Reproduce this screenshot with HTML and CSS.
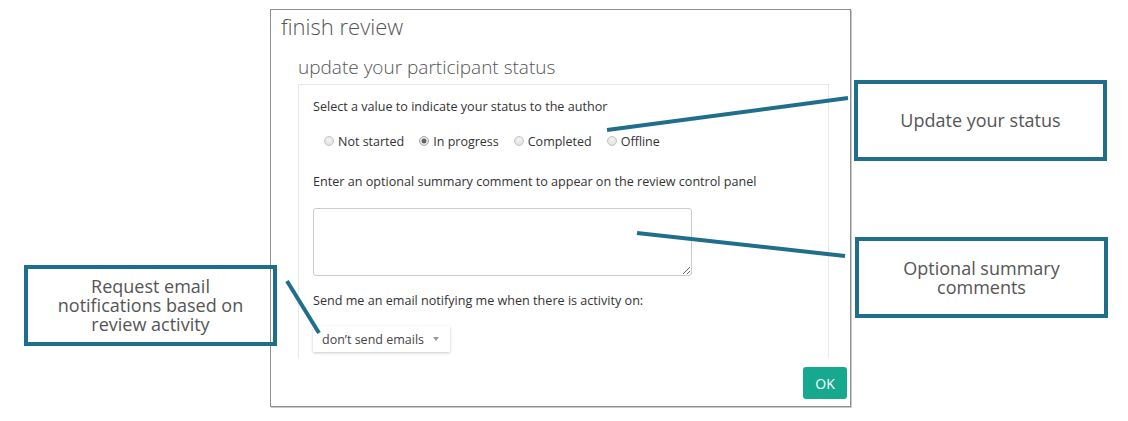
FILE: index.html
```html
<!DOCTYPE html>
<html>
<head>
<meta charset="utf-8">
<link rel="stylesheet" href="styles.css">
</head>
<body>
<div class="page">
  <div class="dialog">
    <div class="title">finish review</div>
    <div class="subtitle">update your participant status</div>
    <div class="panel">
      <div class="text">Select a value to indicate your status to the author</div>
      <div class="radios">
        <label class="radio"><span class="dot"></span>Not started</label>
        <label class="radio"><span class="dot checked"></span>In progress</label>
        <label class="radio"><span class="dot"></span>Completed</label>
        <label class="radio"><span class="dot"></span>Offline</label>
      </div>
      <div class="text text-comment">Enter an optional summary comment to appear on the review control panel</div>
      <textarea class="comment"></textarea>
      <div class="text text-email">Send me an email notifying me when there is activity on:</div>
      <div class="dropdown">don’t send emails<span class="caret"></span></div>
    </div>
    <div class="footer">
      <button class="ok">OK</button>
    </div>
  </div>

  <div class="callout callout-status">Update your status</div>
  <div class="callout callout-summary">Optional summary<br>comments</div>
  <div class="callout callout-email">Request email<br>notifications based on<br>review activity</div>

  <svg class="lines" width="1128" height="421" viewBox="0 0 1128 421">
    <line x1="607" y1="130" x2="848" y2="98"/>
    <line x1="637" y1="233" x2="845" y2="256"/>
    <line x1="287" y1="281" x2="319" y2="333"/>
  </svg>
</div>
</body>
</html>
```
FILE: styles.css
```css
html, body {
  margin: 0;
  padding: 0;
  background: #fff;
}
.page {
  position: relative;
  width: 1128px;
  height: 421px;
  overflow: hidden;
  font-family: "Open Sans", "DejaVu Sans", sans-serif;
  color: #333;
}
.dialog {
  box-sizing: border-box;
  margin: 9px 0 0 270px;
  width: 581px;
  height: 398px;
  border: 1px solid #8e8e8e;
  box-shadow: 1px 1px 0 #c9c9c9;
  display: flex;
  flex-direction: column;
}
.title {
  margin: 1px 0 0 10px;
  font-size: 22px;
  font-weight: 300;
  line-height: 30px;
  color: #555;
}
.subtitle {
  margin: 14px 0 0 27px;
  font-size: 19px;
  font-weight: 300;
  line-height: 24px;
  color: #555;
}
.panel {
  box-sizing: border-box;
  margin: 5px 0 0 27px;
  width: 531px;
  height: 274px;
  border: 1px solid #e8e8e8;
  border-bottom: none;
  padding: 13px 0 0 14px;
  display: flex;
  flex-direction: column;
  align-items: flex-start;
}
.text {
  font-size: 12.6px;
  line-height: 18px;
}
.radios {
  margin: 17px 0 0 11px;
  display: flex;
  gap: 15px;
  font-size: 12.5px;
  line-height: 18px;
}
.radio {
  display: flex;
  align-items: center;
  gap: 4px;
}
.dot {
  box-sizing: border-box;
  width: 10px;
  height: 10px;
  border-radius: 50%;
  border: 1px solid #c4c4c4;
  background: radial-gradient(circle at 50% 35%, #f4f4f4, #dcdcdc);
  position: relative;
  top: -1px;
}
.dot.checked {
  border-color: #aaa;
  background: radial-gradient(circle, #666 0 2.2px, #e4e4e4 2.7px);
}
.text-comment {
  margin-top: 22px;
}
.comment {
  box-sizing: border-box;
  margin: 17px 0 0 0;
  width: 379px;
  height: 68px;
  border: 1px solid #c9ccce;
  border-radius: 3px;
  padding: 4px;
  resize: vertical;
  font-family: inherit;
}
.text-email {
  margin-top: 16px;
}
.dropdown {
  box-sizing: border-box;
  margin-top: 16px;
  width: 137px;
  height: 26px;
  padding-left: 9px;
  display: flex;
  align-items: center;
  font-size: 12.5px;
  color: #444;
  background: #fff;
  box-shadow: 0 1px 3px rgba(0, 0, 0, 0.22);
  border-radius: 1px;
}
.caret {
  margin-left: 9px;
  width: 0;
  height: 0;
  border-left: 3.5px solid transparent;
  border-right: 3.5px solid transparent;
  border-top: 4px solid #999;
}
.footer {
  display: flex;
  justify-content: flex-end;
  padding-right: 3px;
  margin-top: 9px;
}
.ok {
  width: 44px;
  height: 32px;
  border: none;
  border-radius: 3px;
  background: #17a98f;
  color: #fff;
  font-family: inherit;
  font-size: 14px;
  padding: 0;
}
.callout {
  position: absolute;
  box-sizing: border-box;
  width: 253px;
  height: 81px;
  border: 4px solid #1f6f8c;
  display: flex;
  align-items: center;
  justify-content: center;
  text-align: center;
  font-size: 18px;
  line-height: 19px;
  color: #555;
}
.callout-status {
  left: 854px;
  top: 80px;
}
.callout-summary {
  left: 855px;
  top: 237px;
}
.callout-email {
  left: 24px;
  top: 265px;
}
.lines {
  position: absolute;
  left: 0;
  top: 0;
  pointer-events: none;
}
.lines line {
  stroke: #1f6f8c;
  stroke-width: 4;
}
```
